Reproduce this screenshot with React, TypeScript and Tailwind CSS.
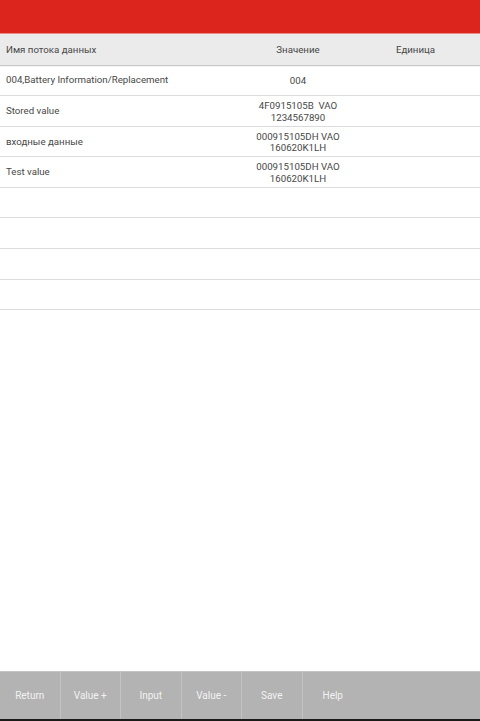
import React from "react";

const rows: { name: string; value: string[]; h: string }[] = [
  { name: "004,Battery Information/Replacement", value: ["004"], h: "h-[31px]" },
  { name: "Stored value", value: ["4F0915105B  VAO", "1234567890"], h: "h-[31px]" },
  { name: "входные данные", value: ["000915105DH VAO", "160620K1LH"], h: "h-[30px]" },
  { name: "Test value", value: ["000915105DH VAO", "160620K1LH"], h: "h-[31px]" },
  { name: "", value: [], h: "h-[30px]" },
  { name: "", value: [], h: "h-[31px]" },
  { name: "", value: [], h: "h-[31px]" },
  { name: "", value: [], h: "h-[30px]" },
];

const buttons = ["Return", "Value +", "Input", "Value -", "Save", "Help"];

export default function App() {
  return (
    <div
      className="w-[480px] h-[721px] bg-white flex flex-col overflow-hidden text-[#474747]"
      style={{ fontFamily: "Roboto, 'Liberation Sans', sans-serif" }}
    >
      <div className="h-[34px] bg-[#db251d] border-b border-[#e98a85]" />
      <div className="h-[31px] bg-[#ebebeb] flex items-center pt-[1px] text-[9.7px] shadow-[0_1px_1px_rgba(0,0,0,0.22)] relative z-10">
        <div className="w-[238px] pl-[6px]">Имя потока данных</div>
        <div className="w-[120px] text-center">Значение</div>
        <div className="w-[115px] text-center">Единица</div>
      </div>
      <div className="flex flex-col">
        {rows.map((r, i) => (
          <div
            key={i}
            className={`${r.h} border-b border-[#dcdcdc] flex items-center pt-[1px] text-[9.7px]`}
          >
            <div className="w-[238px] pl-[6px]">{r.name}</div>
            <div className="w-[120px] text-center leading-[11.5px]">
              {r.value.map((v, j) => (
                <div key={j} className="whitespace-pre">
                  {v}
                </div>
              ))}
            </div>
            <div className="w-[115px]" />
          </div>
        ))}
      </div>
      <div className="flex-1" />
      <div className="h-[48px] bg-[#b3b3b3] flex border-t border-[#c4c4c4]">
        {buttons.map((b, i) => (
          <div
            key={b}
            className={`w-[60.5px] flex items-center justify-center text-[10px] text-[#f2f2f2] ${
              i < buttons.length - 1 ? "border-r border-[#c2c2c2]" : ""
            }`}
          >
            {b}
          </div>
        ))}
      </div>
      <div className="h-[2px] bg-[#1a1a1a]" />
    </div>
  );
}
